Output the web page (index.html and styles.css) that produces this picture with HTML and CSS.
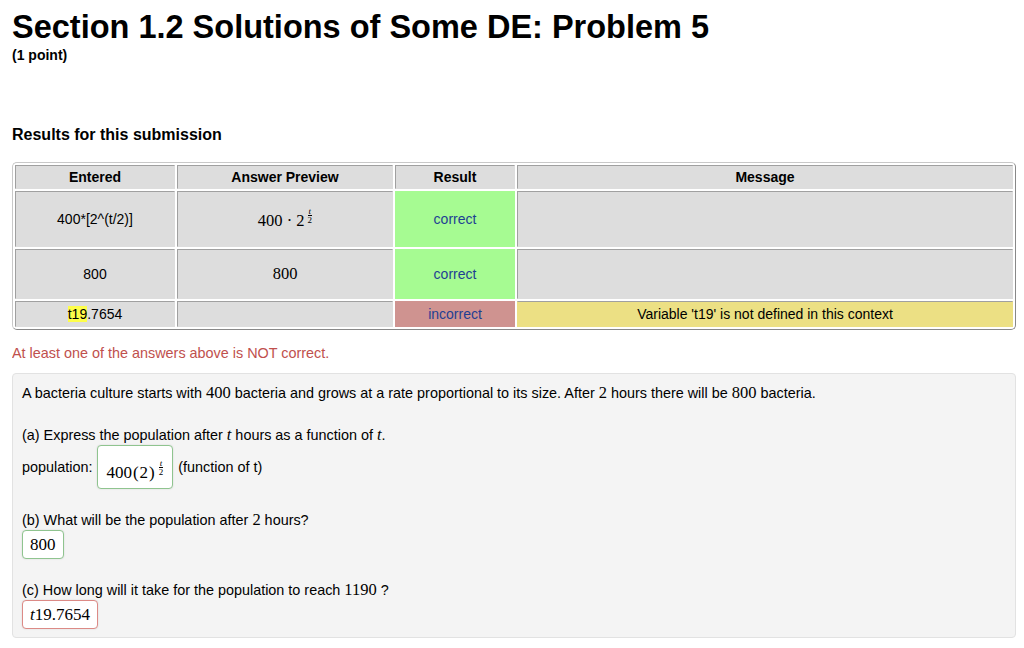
FILE: index.html
```html
<!DOCTYPE html>
<html lang="en">
<head>
  <meta charset="UTF-8" />
  <title>Section 1.2 Solutions of Some DE: Problem 5</title>
  <link rel="stylesheet" href="styles.css">
</head>
<body>
  <h1 class="title">Section 1.2 Solutions of Some DE: Problem 5</h1>
  <div class="points">(1 point)</div>

  <h2 class="results-head">Results for this submission</h2>
  <table class="attempts">
    <colgroup>
      <col class="c-entered" />
      <col class="c-preview" />
      <col class="c-result" />
      <col />
    </colgroup>
    <tr class="head-row">
      <th>Entered</th>
      <th>Answer Preview</th>
      <th>Result</th>
      <th>Message</th>
    </tr>
    <tr class="row-tall">
      <td>400*[2^(t/2)]</td>
      <td><span class="math">400 &middot; 2<span class="sup-frac"><i>t</i><span>2</span></span></span></td>
      <td class="ok">correct</td>
      <td></td>
    </tr>
    <tr class="row-mid">
      <td>800</td>
      <td><span class="math">800</span></td>
      <td class="ok">correct</td>
      <td></td>
    </tr>
    <tr class="row-short">
      <td><span class="hl">t19</span>.7654</td>
      <td></td>
      <td class="bad">incorrect</td>
      <td class="msg">Variable 't19' is not defined in this context</td>
    </tr>
  </table>

  <p class="warning">At least one of the answers above is NOT correct.</p>

  <div class="problem">
    <p class="line">A bacteria culture starts with <span class="math">400</span> bacteria and grows at a rate proportional to its size. After <span class="math">2</span> hours there will be <span class="math">800</span> bacteria.</p>

    <p class="line part">(a) Express the population after <i class="math">t</i> hours as a function of <i class="math">t</i>.</p>
    <div class="answer-row">
      <span>population:</span>
      <span class="answer good big"><span class="math">400<span class="paren">(</span>2<span class="paren">)</span><span class="sup-frac"><i>t</i><span>2</span></span></span></span>
      <span>(function of t)</span>
    </div>

    <p class="line part">(b) What will be the population after <span class="math">2</span> hours?</p>
    <span class="answer good"><span class="math">800</span></span>

    <p class="line part">(c) How long will it take for the population to reach <span class="math">1190</span> ?</p>
    <span class="answer wrong"><span class="math"><i>t</i>19.7654</span></span>
  </div>
</body>
</html>
```

FILE: styles.css
```css
body {
  margin: 0 8px 0 12px;
  font-family: "Liberation Sans", Arial, sans-serif;
  font-size: 14.4px;
  color: #000;
  background: #fff;
}

.title {
  margin: 8px 0 0;
  font-size: 32.5px;
  line-height: 38px;
  font-weight: bold;
}

.points {
  margin-top: 0;
  font-size: 14px;
  line-height: 18px;
  font-weight: bold;
}

.results-head {
  margin: 61px 0 0;
  font-size: 16px;
  line-height: 20px;
}

.math {
  font-family: "Liberation Serif", "Times New Roman", serif;
  font-size: 16.5px;
}

.sup-frac {
  display: inline-flex;
  flex-direction: column;
  align-items: center;
  vertical-align: 12px;
  margin-left: 3px;
  font-size: 9px;
  line-height: 8px;
}

.sup-frac i {
  border-bottom: 1px solid #000;
  padding: 0 1px;
}

.paren {
  margin: 0 1px;
}

/* results table */
.attempts {
  margin-top: 17px;
  width: 1004px;
  table-layout: fixed;
  border-collapse: separate;
  border-spacing: 2px;
  border: 1px solid #c8c8c8;
  border-right-color: #888;
  border-bottom-color: #888;
  border-radius: 5px;
}

.c-entered { width: 160px; }
.c-preview { width: 216px; }
.c-result { width: 120px; }

.attempts th,
.attempts td {
  box-sizing: border-box;
  padding: 0 4px;
  text-align: center;
  background: #dddddd;
  border: 1px solid #dddddd;
  border-top-color: #a0a0a0;
  border-left-color: #a0a0a0;
  font-size: 14px;
}

.head-row th { height: 24px; }
.row-tall td { height: 56px; }
.row-mid td { height: 50px; }
.row-short td { height: 26px; }

.attempts .ok {
  background: #a6fb92;
  border-color: #a6fb92;
  color: #1f3f92;
}

.attempts .bad {
  background: #cf9390;
  border-color: #cf9390;
  color: #1f3f92;
}

.attempts .msg {
  background: #ece084;
  border-color: #ece084;
  border-top-color: #a0a0a0;
}

.hl {
  background: #fefe4a;
}

.warning {
  margin: 13px 0 0;
  line-height: 20px;
  color: #c0504d;
}

/* problem box */
.problem {
  margin-top: 10px;
  padding: 9px 9px 8px;
  background: #f4f4f4;
  border: 1px solid #e2e2e2;
  border-radius: 4px;
  line-height: 20px;
}

.line {
  margin: 0;
}

.part {
  margin-top: 22px;
}

.answer-row {
  display: flex;
  align-items: center;
  gap: 5px;
  height: 44px;
}

.answer {
  display: inline-flex;
  align-items: center;
  box-sizing: border-box;
  height: 29px;
  padding: 0 7px;
  background: #fff;
  border: 1px solid #8fc48f;
  border-radius: 4px;
  box-shadow: 0 0 2px rgba(0, 0, 0, 0.12);
}

.answer .math {
  font-size: 17px;
}

.answer.big {
  height: 44px;
  padding: 0 9px 0 8px;
}

.answer.big .math {
  padding-top: 8px;
}

.answer.wrong {
  border-color: #dc8a86;
}

.problem > .answer + .part,
.answer-row + .part {
  margin-top: 21px;
}
```
